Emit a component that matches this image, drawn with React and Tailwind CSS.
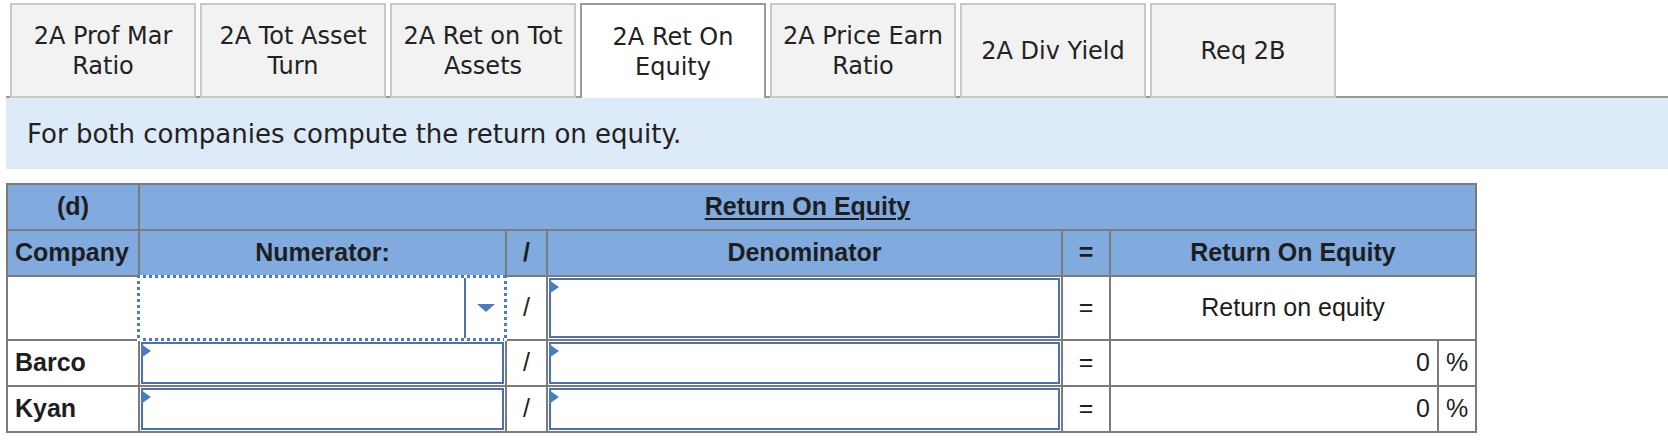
import React from 'react';

const tabs = [
  ['2A Prof Mar', 'Ratio'],
  ['2A Tot Asset', 'Turn'],
  ['2A Ret on Tot', 'Assets'],
  ['2A Ret On', 'Equity'],
  ['2A Price Earn', 'Ratio'],
  ['2A Div Yield'],
  ['Req 2B'],
];

const ACTIVE = 3;

function Flag() {
  return (
    <span className="absolute left-[-2px] top-0 w-0 h-0 border-t-[7px] border-b-[7px] border-t-transparent border-b-transparent border-l-[10px] border-l-[#4a7cc0]" />
  );
}

function InputBox({ tall }) {
  return (
    <div
      className={`relative w-full ${tall ? 'h-[60px]' : 'h-[42px]'} border-2 border-[#4a72b3] bg-white`}
    >
      <Flag />
    </div>
  );
}

// dotted focus ring drawn as square dots like the original
function DottedRing() {
  return (
    <>
      <span className="absolute left-[-3px] right-[-2px] top-[-3px] h-[3px] bg-[repeating-linear-gradient(90deg,#4a7cc0_0px,#4a7cc0_3px,#fff_3px,#fff_6px)]" />
      <span className="absolute left-[-3px] right-[-2px] bottom-[-2px] h-[3px] bg-[repeating-linear-gradient(90deg,#4a7cc0_0px,#4a7cc0_3px,#fff_3px,#fff_6px)]" />
      <span className="absolute top-[-3px] bottom-[-2px] left-[-3px] w-[3px] bg-[repeating-linear-gradient(180deg,#4a7cc0_0px,#4a7cc0_3px,#fff_3px,#fff_6px)]" />
      <span className="absolute top-[-3px] bottom-[-2px] right-[-2px] w-[3px] bg-[repeating-linear-gradient(180deg,#4a7cc0_0px,#4a7cc0_3px,#fff_3px,#fff_6px)]" />
    </>
  );
}

function Tabs() {
  return (
    <div className="flex gap-[4px] pl-[10px] pt-[3px] text-[24px]">
      {tabs.map((lines, i) => (
        <div
          key={i}
          className={
            i === ACTIVE
              ? 'relative z-10 w-[186px] h-[95px] border-2 border-b-0 border-[#9a9a9a] bg-white flex flex-col items-center justify-center'
              : 'w-[186px] h-[95px] border-2 border-[#c8c8c8] bg-[#f2f2f2] flex flex-col items-center justify-center'
          }
        >
          {lines.map((l) => (
            <span key={l} className="leading-[30px]">
              {l}
            </span>
          ))}
        </div>
      ))}
    </div>
  );
}

const cell = 'border-2 border-[#7b7b7b]';

export default function App() {
  return (
    <div className="bg-white w-[1668px] h-[444px] text-[#222] font-['DejaVu_Sans',Verdana,sans-serif]">
      <Tabs />
      <div className="ml-[6px] mt-[-2px] h-[73px] border-t-2 border-[#999] bg-[#ddeaf7] flex items-center pl-[21px] pt-[2px] text-[26px]">
        For both companies compute the return on equity.
      </div>

      <table className="ml-[6px] mt-[14px] table-fixed border-collapse w-[1469px] font-['Liberation_Sans',Arial,sans-serif] text-[25px] text-[#1e1e1e]">
        <colgroup>
          <col className="w-[132px]" />
          <col className="w-[367px]" />
          <col className="w-[41px]" />
          <col className="w-[515px]" />
          <col className="w-[48px]" />
          <col className="w-[328px]" />
          <col className="w-[38px]" />
        </colgroup>
        <thead>
          <tr className="h-[46px] bg-[#81aadf] font-bold">
            <th className={`${cell} text-center`}>(d)</th>
            <th className={`${cell} text-center`} colSpan={6}>
              <span className="underline underline-offset-[3px] decoration-2">Return On Equity</span>
            </th>
          </tr>
          <tr className="h-[46px] bg-[#81aadf] font-bold">
            <th className={`${cell} text-left pl-[7px]`}>Company</th>
            <th className={`${cell} text-center`}>Numerator:</th>
            <th className={`${cell} text-center`}>/</th>
            <th className={`${cell} text-center`}>Denominator</th>
            <th className={`${cell} text-center`}>=</th>
            <th className={`${cell} text-center`} colSpan={2}>
              Return On Equity
            </th>
          </tr>
        </thead>
        <tbody>
          <tr className="h-[63px]">
            <td className={cell}></td>
            <td className={`${cell} p-0`}>
              <div className="relative z-10 h-[61px] flex bg-white">
                <div className="flex-1" />
                <div className="w-[41px] border-l-2 border-[#4a72b3] flex items-center justify-center">
                  <span className="w-0 h-0 border-l-[9px] border-r-[9px] border-l-transparent border-r-transparent border-t-[8px] border-t-[#4a7cc0]" />
                </div>
                <DottedRing />
              </div>
            </td>
            <td className={`${cell} text-center`}>/</td>
            <td className={`${cell} p-[1px]`}>
              <InputBox tall />
            </td>
            <td className={`${cell} text-center`}>=</td>
            <td className={`${cell} text-center`} colSpan={2}>
              Return on equity
            </td>
          </tr>
          {['Barco', 'Kyan'].map((name) => (
            <tr key={name} className="h-[46px]">
              <td className={`${cell} font-bold pl-[7px]`}>{name}</td>
              <td className={`${cell} p-[1px]`}>
                <InputBox />
              </td>
              <td className={`${cell} text-center`}>/</td>
              <td className={`${cell} p-[1px]`}>
                <InputBox />
              </td>
              <td className={`${cell} text-center`}>=</td>
              <td className={`${cell} text-right pr-[7px]`}>0</td>
              <td className={`${cell} text-center`}>%</td>
            </tr>
          ))}
        </tbody>
      </table>
    </div>
  );
}
